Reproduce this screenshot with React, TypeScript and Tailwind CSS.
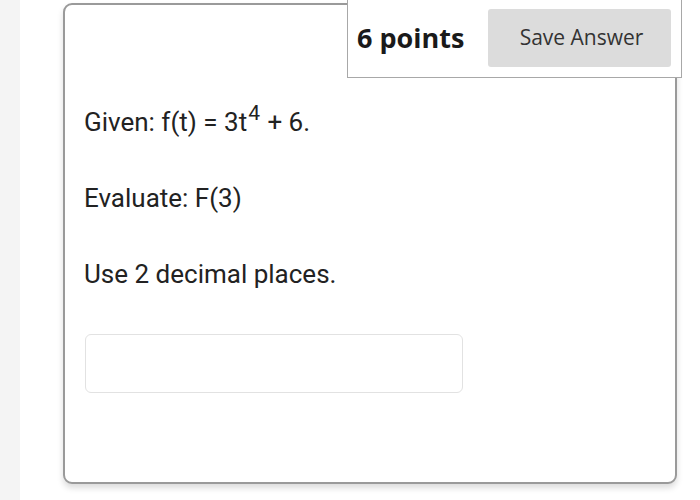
export default function App() {
  return (
    <div className="flex h-[500px] w-[700px] overflow-hidden bg-white font-['Roboto',sans-serif] text-[#222]">
      {/* left gutter */}
      <div className="h-full w-[20px] bg-[#f4f4f4]" />

      <div className="pl-[43px] pt-[3px]">
        <div className="relative h-[481px] w-[614px] rounded-[9px] border-2 border-[#9a9a9a] bg-white shadow-[0_4px_6px_rgba(0,0,0,0.14)]">
          {/* points header */}
          <div className="absolute -right-[7px] -top-[7px] flex h-[80px] w-[335px] items-center justify-between border-[1.5px] border-[#a8a8a8] bg-white pl-[9px] pr-[10px] font-['Open_Sans',sans-serif]">
            <span className="text-[27px] font-bold text-[#1a1a1a]">6 points</span>
            <button className="h-[58px] w-[183px] rounded-[3px] bg-[#dcdcdc] pl-[4px] text-[21px] text-[#333]">
              Save Answer
            </button>
          </div>

          <div className="flex flex-col gap-[46px] pl-[19px] pt-[102px] text-[26px] leading-[30px]">
            <p>
              Given: f(t) = 3t<span className="relative -top-[11px] px-[1px] text-[21px] leading-none">4</span> + 6.
            </p>
            <p>Evaluate: F(3)</p>
            <p>Use 2 decimal places.</p>
          </div>

          <input
            type="text"
            className="ml-[20px] mt-[45px] block h-[59px] w-[378px] rounded-[6px] border-[1.5px] border-[#e2e2e2] bg-white"
          />
        </div>
      </div>
    </div>
  )
}
